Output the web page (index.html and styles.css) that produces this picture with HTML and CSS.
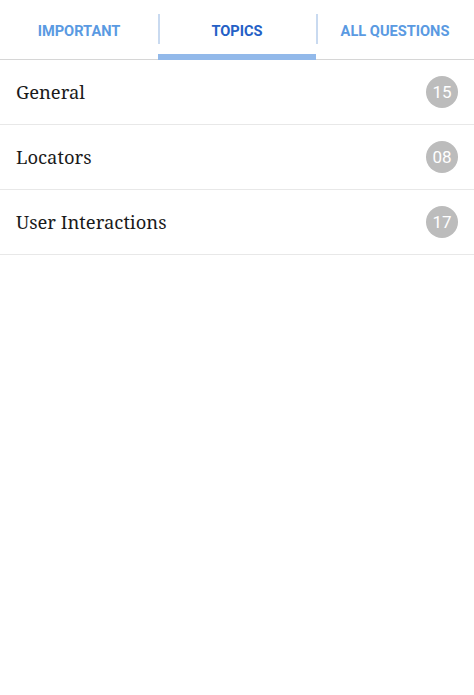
FILE: index.html
```html
<!DOCTYPE html>
<html>
<head>
<meta charset="utf-8">
<link rel="stylesheet" href="styles.css">
</head>
<body>
<div class="tabs">
  <div class="tab">IMPORTANT</div>
  <div class="tab active">TOPICS</div>
  <div class="tab">ALL QUESTIONS</div>
</div>
<ul class="list">
  <li class="row"><span class="title">General</span><span class="badge">15</span></li>
  <li class="row"><span class="title">Locators</span><span class="badge">08</span></li>
  <li class="row"><span class="title">User Interactions</span><span class="badge">17</span></li>
</ul>
</body>
</html>
```
FILE: styles.css
```css
html, body {
  margin: 0;
  padding: 0;
  background: #fff;
}
.tabs {
  display: grid;
  grid-template-columns: 158px 158px 158px;
  border-bottom: 1px solid #d6d6d6;
  box-sizing: border-box;
  height: 60px;
}
.tab {
  position: relative;
  display: flex;
  align-items: center;
  justify-content: center;
  padding-top: 3px;
  font-family: Roboto, "Liberation Sans", sans-serif;
  font-weight: 700;
  font-size: 14.6px;
  color: #5a9ae2;
}
.tab + .tab::before {
  content: "";
  position: absolute;
  left: 0;
  top: 14px;
  height: 30px;
  width: 1.5px;
  background: #c9daf0;
}
.tab.active {
  color: #2460c6;
  border-bottom: 6px solid #92b9ea;
  padding-top: 7px;
  margin-bottom: -1px;
}
.list {
  list-style: none;
  margin: 0;
  padding: 0;
}
.row {
  display: flex;
  align-items: center;
  justify-content: space-between;
  padding: 0 16px;
  border-bottom: 1.5px solid #e8e8e8;
  box-sizing: border-box;
  height: 65px;
}
.title {
  font-family: "Noto Serif", "DejaVu Serif", "Liberation Serif", serif;
  font-size: 18.4px;
  color: #1a1a1a;
  margin-top: -1px;
}
.badge {
  width: 32px;
  height: 32px;
  border-radius: 50%;
  background: #bcbcbc;
  color: #fff;
  font-family: Roboto, "Liberation Sans", sans-serif;
  font-size: 17px;
  display: flex;
  align-items: center;
  justify-content: center;
}
```
